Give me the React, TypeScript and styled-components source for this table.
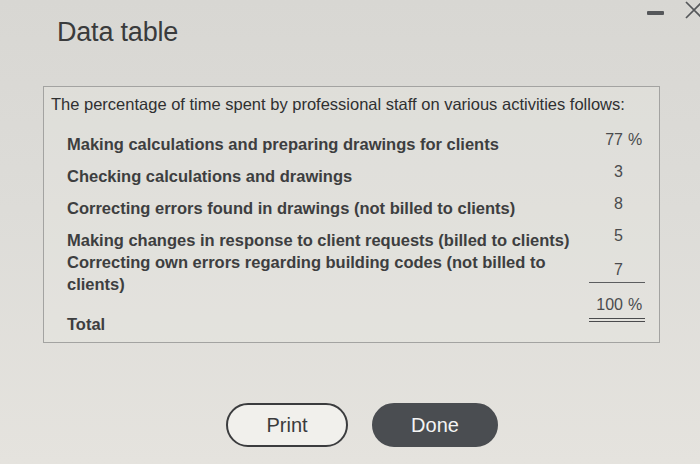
import React from "react";
import styled, { createGlobalStyle } from "styled-components";

interface Activity {
  label: string;
  value: string;
  unit?: string;
}

const activities: Activity[] = [
  { label: "Making calculations and preparing drawings for clients", value: "77", unit: "%" },
  { label: "Checking calculations and drawings", value: "3" },
  { label: "Correcting errors found in drawings (not billed to clients)", value: "8" },
  { label: "Making changes in response to client requests (billed to clients)", value: "5" },
];

const GlobalStyle = createGlobalStyle`
  html, body {
    margin: 0;
    padding: 0;
  }
  body {
    width: 700px;
    height: 464px;
    overflow: hidden;
    font-family: "Liberation Sans", Arial, sans-serif;
    background: linear-gradient(180deg, #d8d7d3 0%, #dddcd8 45%, #e5e3de 100%);
  }
`;

const Page = styled.div`
  width: 700px;
  height: 464px;
  display: flex;
  flex-direction: column;
`;

const Header = styled.div`
  display: flex;
  justify-content: space-between;
  align-items: flex-start;
  height: 86px;
`;

const Title = styled.h1`
  margin: 17px 0 0 57px;
  font-size: 27px;
  line-height: 30px;
  font-weight: 400;
  color: #3a3b3c;
  letter-spacing: -0.2px;
`;

const Controls = styled.div`
  display: flex;
  align-items: flex-start;
  gap: 21px;
  padding-top: 1px;
  margin-right: -3px;
`;

const Minimize = styled.div`
  width: 17px;
  height: 4px;
  margin-top: 10px;
  border-radius: 1px;
  background: #55575a;
`;

const DataBox = styled.div`
  margin-left: 43px;
  width: 617px;
  box-sizing: border-box;
  border: 1px solid #a3a3a1;
  background: rgba(232, 231, 227, 0.35);
  padding: 7px 14px 7px 7px;
`;

const Intro = styled.p`
  margin: 0 0 14px;
  font-size: 16.5px;
  line-height: 20px;
  color: #2f3031;
`;

const Row = styled.div`
  display: grid;
  grid-template-columns: 1fr 56px;
  column-gap: 10px;
  padding-left: 16px;
`;

const Label = styled.div<{ $top: number; $bottom: number }>`
  padding-top: ${(p) => p.$top}px;
  padding-bottom: ${(p) => p.$bottom}px;
  font-size: 16.5px;
  line-height: 22px;
  font-weight: 700;
  color: #3d3e40;
`;

const Value = styled.div<{ $top: number; $line?: "single" | "double" }>`
  align-self: start;
  display: grid;
  grid-template-columns: 34px 22px;
  padding-top: ${(p) => p.$top}px;
  padding-bottom: ${(p) => (p.$line ? (p.$line === "double" ? 3 : 2) : 0)}px;
  border-bottom: ${(p) =>
    p.$line === "double" ? "4px double #4a4b4d" : p.$line === "single" ? "1px solid #5c5d5f" : "none"};
  font-size: 16px;
  line-height: 20px;
  color: #4a4b4d;
`;

const Num = styled.span`
  text-align: right;
`;

const Unit = styled.span`
  padding-left: 5px;
`;

const ButtonBar = styled.div`
  display: flex;
  align-items: center;
  gap: 24px;
  padding: 60px 0 0 226px;
`;

const PillButton = styled.button<{ $primary?: boolean }>`
  width: ${(p) => (p.$primary ? 126 : 122)}px;
  height: 44px;
  box-sizing: border-box;
  border-radius: 22px;
  border: 2px solid ${(p) => (p.$primary ? "#4a4d51" : "#3b3c3e")};
  background: ${(p) => (p.$primary ? "#4a4d51" : "#f1f0ec")};
  color: ${(p) => (p.$primary ? "#f4f4f4" : "#3a3b3c")};
  font-family: "Liberation Sans", Arial, sans-serif;
  font-size: 20px;
  cursor: pointer;
`;

const App: React.FC = () => {
  return (
    <Page>
      <GlobalStyle />
      <Header>
        <Title>Data table</Title>
        <Controls>
          <Minimize />
          <svg width="18" height="18" viewBox="0 0 18 18">
            <path d="M1 1 L17 17 M17 1 L1 17" stroke="#55575a" strokeWidth="1.7" fill="none" />
          </svg>
        </Controls>
      </Header>
      <DataBox>
        <Intro>The percentage of time spent by professional staff on various activities follows:</Intro>
        {activities.map((a, i) => (
          <Row key={i}>
            <Label $top={5} $bottom={i === 3 ? 0 : 5}>{a.label}</Label>
            <Value $top={2}>
              <Num>{a.value}</Num>
              <Unit>{a.unit ?? ""}</Unit>
            </Value>
          </Row>
        ))}
        <Row>
          <Label $top={0} $bottom={0}>
            Correcting own errors regarding building codes (not billed to clients)
          </Label>
          <Value $top={9} $line="single">
            <Num>7</Num>
            <Unit />
          </Value>
        </Row>
        <Row>
          <Label $top={18} $bottom={0}>Total</Label>
          <Value $top={0} $line="double">
            <Num>100</Num>
            <Unit>%</Unit>
          </Value>
        </Row>
      </DataBox>
      <ButtonBar>
        <PillButton>Print</PillButton>
        <PillButton $primary>Done</PillButton>
      </ButtonBar>
    </Page>
  );
};

export default App;
